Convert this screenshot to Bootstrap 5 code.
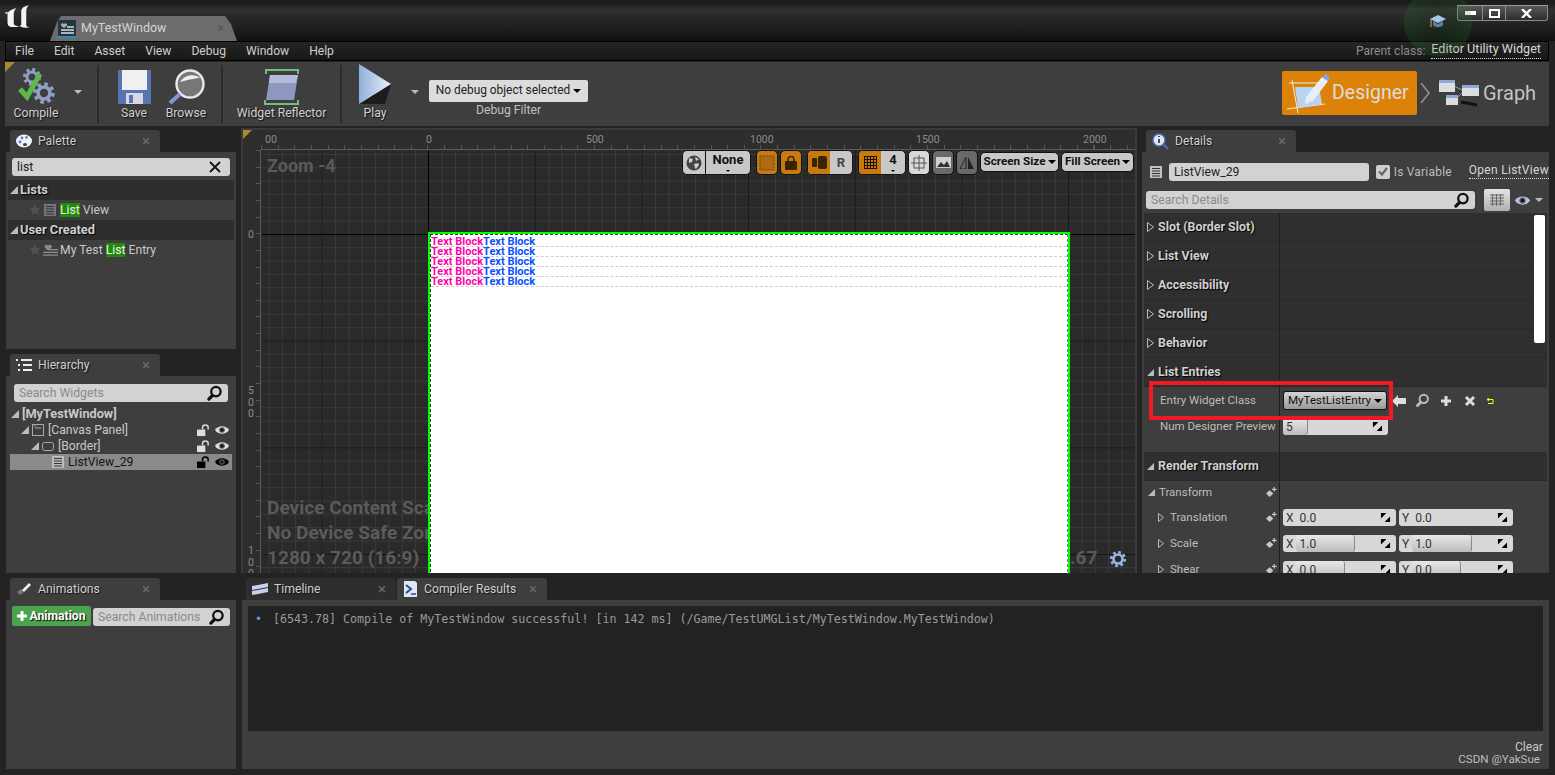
<!DOCTYPE html>
<html lang="en">
<head>
  <meta charset="UTF-8" />
  <meta name="viewport" content="width=device-width, initial-scale=1.0" />
  <title>MyTestWindow</title>
  <link href="https://cdn.jsdelivr.net/npm/bootstrap@5.3.2/dist/css/bootstrap.min.css" rel="stylesheet" />
  <style>
    html, body { height: 775px; overflow: hidden; }
    body {
      background: #232323;
      color: #c8c8c8;
      font-family: Roboto, "Liberation Sans", sans-serif;
      font-size: 12px;
      line-height: 1;
    }
    svg { display: block; flex: none; }
    .ue-app { width: 1555px; height: 775px; position: relative; overflow: hidden; }

    /* title bar */
    .ue-title { height: 41px; padding-left: 5px; background: linear-gradient(#1b1b1b 0, #1b1b1b 3px, #2f2f2f 10px, #1e1e1e 28px, #111 41px); }
    .ue-logo { width: 45px; height: 41px; }
    .ue-doc-tab {
      width: 187px; height: 25px; margin-top: 16px; padding: 0 5px 0 8px;
      background: #6c6c6c; color: #d4d4d4; font-size: 12.5px;
      clip-path: polygon(0 100%, 7px 6px, 11px 0, calc(100% - 12px) 0, calc(100% - 6px) 8px, 100% 100%);
    }
    .ue-win-btns { margin: 5px 7px 0 auto; height: 16px; border: 1px solid #8a8a8a; border-top-color: #999; border-radius: 0 0 3px 3px; background: linear-gradient(#5a5a5a, #2d2d2d); }
    .ue-win-btns > div { height: 100%; display: flex; align-items: center; justify-content: center; border-right: 1px solid #8a8a8a; }
    .ue-win-btns > div:last-child { border-right: 0; }
    .ue-glow { position: absolute; left: 1404px; top: -12px; width: 68px; height: 68px; border-radius: 50%; background: radial-gradient(circle, rgba(40,130,40,.06) 0, rgba(40,130,40,.2) 70%, rgba(60,170,60,.42) 96%, transparent 100%); pointer-events: none; }
    .ue-hat { position: absolute; left: 1430px; top: 14px; }

    /* menu */
    .ue-menu { height: 20px; margin: 0 6px 0 5px; padding: 0 7px 0 9px; background: linear-gradient(#262626, #161616); border: 1px solid #000; color: #cfcfcf; font-size: 12.1px; gap: 20px; }
    .ue-linkish { border-bottom: 1px dotted #ddd; color: #d6d6d6; padding-bottom: 2px; }

    /* main toolbar */
    .ue-tools { height: 64px; margin: 1px 6px 0 5px; background: #3e3e3e; position: relative; }
    .ue-corner { position: absolute; left: 0; top: 0; width: 0; height: 0; border-top: 10px solid #a98a2c; border-right: 10px solid transparent; }
    .ue-tool { display: flex; flex-direction: column; align-items: center; justify-content: flex-end; height: 58px; color: #d0d0d0; font-size: 12.2px; text-shadow: 1px 1px 1px #111; flex: none; }
    .ue-tool span { margin-top: 2px; margin-bottom: 1px; }
    .ue-sep { width: 2px; height: 58px; background: #2b2b2b; margin-top: 3px; flex: none; }
    .ue-caret { width: 0; height: 0; border-left: 4px solid transparent; border-right: 4px solid transparent; border-top: 4px solid #bbb; flex: none; }
    .ue-caret-dark { border-top-color: #000; }
    .ue-debug { width: 159px; margin-left: 3px; flex: none; }
    .ue-debug-box { height: 22px; background: #dcdcdc; color: #222; border-radius: 2px; gap: 3px; font-size: 11.9px; margin-top: 18px; }
    .ue-mode { position: absolute; left: 1277px; top: 9px; width: 135px; height: 44px; background: #dc8209; border-radius: 2px; color: #ddd; font-size: 19.5px; }
    .ue-graph { position: absolute; left: 1434px; top: 9px; height: 44px; color: #c4c4c4; font-size: 20px; }

    /* panels */
    .ue-main { height: 450px; padding: 3px 6px 0 6px; margin-top: 1px; }
    .ue-col-l { width: 230px; flex: none; }
    .ue-tabrow { height: 22px; padding-left: 4px; flex: none; }
    .ue-tab { width: 150px; height: 22px; padding: 0 10px 0 6px; background: #3e3e3e; border-radius: 3px 3px 0 0; color: #cfcfcf; font-size: 12.2px; text-shadow: 1px 1px 1px #111; gap: 6px; flex: none; }
    .ue-tab-off { background: #2e2e2e; }
    .ue-tab i { margin-left: auto; font-style: normal; color: #6a6a6a; font-size: 15px; line-height: 1; text-shadow: none; }
    .ue-panel { background: #3e3e3e; }
    .ue-field { background: #d2d2d2; border-radius: 3px; color: #333; font-size: 12.2px; padding: 0 5px; }
    .ue-field input.form-control { background: transparent; border: 0; border-radius: 0; padding: 0; height: 100%; min-height: 0; font: inherit; color: #222; box-shadow: none; }
    .ue-field input.form-control::placeholder { color: #8b8b8b; opacity: 1; }
    .ue-palhead { height: 20px; margin: 0 2px; padding-left: 2px; background: #2e2e2e; color: #d0d0d0; font-weight: 700; font-size: 12.8px; text-shadow: 1px 1px 1px #000; gap: 2px; }
    .ue-palitem { height: 20px; color: #c8c8c8; font-size: 12.2px; gap: 3px; padding-left: 24px; }
    .ue-hit { background: #1f8b06; color: #eee; }
    .ue-tree { height: 16px; color: #c8c8c8; font-size: 12.2px; margin: 0 4px; gap: 3px; }
    .ue-tree-sel { background: #8a8a8a; color: #151515; }
    .ue-treeend { margin-left: auto; gap: 5px; padding-right: 3px; }

    /* canvas */
    .ue-center { width: 896px; height: 445px; margin: -2px 0 0 5px; background: #2d2d2d; border: 2px solid #3a3a3a; border-bottom: 0; position: relative; overflow: hidden; flex: none; }
    .ue-ruler-x { position: absolute; left: 18px; right: 0; top: 0; height: 20px; background: repeating-linear-gradient(90deg, #555 0 1px, transparent 1px 16.65px) 0 bottom / 100% 4px no-repeat #2d2d2d; border-bottom: 1px solid #5a5a5a; }
    .ue-ruler-y { position: absolute; left: 0; top: 20px; bottom: 0; width: 18px; background: repeating-linear-gradient(#555 0 1px, transparent 1px 16.65px) right 0 / 4px 100% no-repeat #2d2d2d; border-right: 1px solid #5a5a5a; }
    .ue-rlabel { position: absolute; color: #8c8c8c; font-size: 10.5px; }
    .ue-grid {
      position: absolute; left: 19px; top: 21px; right: 0; bottom: 0; background-color: #2a2a2a;
      background-image:
        linear-gradient(#000, #000), linear-gradient(#000, #000),
        linear-gradient(90deg, #161616 1px, transparent 1px), linear-gradient(#161616 1px, transparent 1px),
        linear-gradient(90deg, #3a3a3a 1px, transparent 1px), linear-gradient(#3a3a3a 1px, transparent 1px);
      background-size: 1px 100%, 100% 1px, 106.67px 106.67px, 106.67px 106.67px, 13.33px 13.33px, 13.33px 13.33px;
      background-position: 166px 0, 0 83px, 59.5px 83px, 59.5px 83px, 6.5px 3px, 6.5px 3px;
      background-repeat: no-repeat, no-repeat, repeat, repeat, repeat, repeat;
    }
    .ue-ghost { position: absolute; color: #5b5b5b; font-weight: 700; white-space: nowrap; }
    .ue-ghost-big { font-size: 19.1px; }
    .ue-sheet { position: absolute; left: 185px; top: 102px; width: 642px; height: 345px; background: #fff; border: 2px solid #0f0; border-bottom: 0; }
    .ue-sheet-in { height: 100%; padding-top: 2px; border-right: 1px dashed #777; border-left: 1px dashed #333; border-top: 1px dashed #333; }
    .ue-entry { height: 10px; border-bottom: 1px dashed #ccc; font-size: 11px; font-weight: 700; line-height: 10px; white-space: nowrap; }
    .ue-pink { color: #f0a; }
    .ue-blue { color: #0a50ff; }
    .ue-vp { position: absolute; left: 439px; top: 20px; height: 26px; gap: 2px; color: #111; font-weight: 700; }
    .ue-vbtn { height: 25px; background: #c8c8c8; border: 1px solid #111; border-radius: 5px; overflow: hidden; font-size: 13px; }
    .ue-vcell { height: 100%; }
    .ue-orange { background: #c97a0f; }
    .ue-vdim { background: #6a6a6a; }
    .ue-vlight { background: #d8d8d8; }
    .ue-vdrop { height: 20px; margin-top: 2px; gap: 2px; font-size: 11.7px; }

    /* details */
    .ue-col-r { width: 407px; margin-left: 5px; flex: none; }
    .ue-details { height: 421px; overflow: hidden; position: relative; }
    .ue-nameline { height: 39px; padding-left: 8px; color: #c8c8c8; }
    .ue-check { width: 14px; height: 14px; background: #cfcfcf; border-radius: 2px; margin: 0 4px 0 7px; }
    .ue-list { margin: 0 2px; position: relative; }
    .ue-sec { height: 29px; background: #2f2f2f; color: #d0d0d0; font-weight: 700; font-size: 12.4px; text-shadow: 1px 1px 1px #000; padding-left: 3px; gap: 4px; border-bottom: 1px solid #292929; }
    .ue-divider { position: absolute; left: 135px; top: 0; bottom: 0; width: 1px; background: #1f1f1f; }
    .ue-thumb { position: absolute; left: 390px; top: 2px; width: 11px; height: 128px; background: #fff; border-radius: 2px; }
    .ue-prop { background: #3e3e3e; color: #bdbdbd; font-size: 11.5px; }
    .ue-propname { width: 135px; flex: none; overflow: hidden; white-space: nowrap; }
    .ue-combo { width: 104px; height: 19px; margin-left: 4px; gap: 3px; background: linear-gradient(#d4d4d4, #9a9a9a); border: 1px solid #111; border-radius: 3px; color: #111; font-size: 11.6px; }
    .ue-spin { height: 17px; background: #d8d8d8; border-radius: 3px; color: #333; font-size: 12px; position: relative; overflow: hidden; padding: 0 5px 0 3px; }
    .ue-spin b { font-weight: 400; position: relative; }
    .ue-spin svg { margin-left: auto; position: relative; }
    .ue-spin u { position: absolute; left: 13px; top: 0; bottom: 0; background: linear-gradient(#e8e8e8, #bcbcbc); border-right: 1px solid #888; border-radius: 3px; text-decoration: none; }
    .ue-redbox { position: absolute; left: 7px; top: 229px; width: 244px; height: 39px; border: 4px solid #ed1c24; pointer-events: none; }

    /* bottom */
    .ue-bottom { height: 192px; padding: 1px 6px 0; }
    .ue-col-b { width: 1307px; margin-left: 6px; flex: none; }
    .ue-logbox { height: 125px; margin: 6px 6px 0; background: #222; padding: 8px 7px; font-family: "DejaVu Sans Mono", monospace; font-size: 11.65px; color: #9a9a9a; white-space: nowrap; gap: 11px; }
    .ue-addbtn { width: 79px; height: 20px; background: #4da24d; border-radius: 2px; color: #fff; font-weight: 700; font-size: 12.2px; text-shadow: 1px 1px 1px #000; gap: 2px; }
    .ue-foot { height: 38px; padding: 10px 6px 0 0; text-align: right; }
  </style>
</head>
<body>

  <svg width="0" height="0" class="position-absolute">
    <defs>
      <symbol id="s-spin" viewBox="0 0 12 12"><path d="M1 1h6L1 7zM11 11H5l6-6z" fill="#000"/></symbol>
      <symbol id="s-mag" viewBox="0 0 18 18"><circle cx="10.5" cy="7" r="5" fill="none" stroke="currentColor" stroke-width="2.4"/><path d="M7 11l-4 4" stroke="currentColor" stroke-width="3.4" stroke-linecap="round"/></symbol>
      <symbol id="s-lock" viewBox="0 0 14 14"><rect x="0" y="6" width="9" height="7" fill="currentColor"/><path d="M6 6V3.500a3 2.500 0 0 1 6 0V6" fill="none" stroke="currentColor" stroke-width="1.600"/></symbol>
      <symbol id="s-eye" viewBox="0 0 14 10"><path d="M0 5C3 0 11 0 14 5 11 10 3 10 0 5z" fill="currentColor"/><circle cx="7" cy="5" r="2.800" fill="#555"/><circle cx="7" cy="5" r="1.500" fill="#111"/></symbol>
      <symbol id="s-listicon" viewBox="0 0 12 12"><rect width="12" height="12" fill="currentColor" opacity=".75"/><path d="M2 2.500h8M2 5h8M2 7.500h8M2 10h8" stroke="#333" stroke-width="1"/></symbol>
      <symbol id="s-star" viewBox="0 0 10 10"><path d="M5 .5l1.300 3H9.500L7 5.600 8 9 5 7.100 2 9l1-3.400L.5 3.500h3.200z" fill="#4f4f4f" stroke="#5e5e5e" stroke-width=".5"/></symbol>
      <symbol id="s-entry" viewBox="0 0 16 14"><path d="M2 1.500c1.200-1.200 2.500-1 3.500 0 1-1 2.300-1.200 3.500 0 1 1.200.5 2.500-3.500 5.500-4-3-4.500-4.300-3.500-5.500z" fill="#8a8a8a"/><path d="M6 6h10M0 9h16M0 12h16" stroke="#8f8f8f" stroke-width="1.500"/></symbol>
      <symbol id="s-addkey" viewBox="0 0 12 12"><path d="M0 7l4-3.500 4 3.500-4 4z" fill="#c8c8c8"/><path d="M9 0v5M6.500 2.500h5" stroke="#c8c8c8" stroke-width="1.300"/></symbol>
      <symbol id="s-gear" viewBox="0 0 20 20"><circle cx="10" cy="10" r="7.500" fill="none" stroke="currentColor" stroke-width="3" stroke-dasharray="3 2.890"/><circle cx="10" cy="10" r="5" fill="none" stroke="currentColor" stroke-width="3"/></symbol>
    </defs>
  </svg>

  <div class="ue-app">
    <div class="ue-title d-flex align-items-start">
      <svg class="ue-logo" viewBox="0 0 36 41" preserveAspectRatio="none"><path d="M1 14c2-3 5-5 8-6-1 2-2 3-2 6v9c0 2 1 3 3 3 1 0 2 0 3-1V11c0-2 1-3 2-4l4-2c-1 2-2 3-2 6v13c0 2 0 3 3 3-2 1-5 1-7 0l-1-1c-2 1-4 1-6 1-3 0-4-2-4-5v-8c0-2 0-2-1-2l-1 1z" fill="#f4f4f4"/></svg>
      <div class="ue-doc-tab d-flex align-items-center">
        <svg width="18" height="18" viewBox="0 0 18 18" style="margin-right:5px"><rect width="18" height="18" fill="#23353f"/><path d="M3 4c1-1 2-1 3 0 1-1 2-1 3 0 .5 1 0 2-3 4-3-2-3.500-3-3-4z" fill="#aaa"/><path d="M9 7h7M3 10h13M3 13h13" stroke="#ddd" stroke-width="1.500"/><rect y="16" width="18" height="2" fill="#2b8bc4"/></svg>
        <span>MyTestWindow</span>
        <span class="ms-auto me-2" style="color:#555">&#215;</span>
      </div>
      <div class="ue-win-btns d-flex">
        <div style="width:25px"><svg width="11" height="4"><rect width="11" height="4" fill="#fff"/></svg></div>
        <div style="width:23px"><svg width="11" height="9"><rect x="1" y="1" width="9" height="7" fill="none" stroke="#fff" stroke-width="2"/></svg></div>
        <div style="width:41px"><svg width="11" height="9" viewBox="0 0 11 9"><path d="M1 0l9 9M10 0L1 9" stroke="#fff" stroke-width="2.400"/></svg></div>
      </div>
    </div>
    <div class="ue-glow"></div>
    <svg class="ue-hat" width="16" height="16" viewBox="0 0 16 16"><path d="M0 5l8-4 8 4-8 4z" fill="#a9c4e6"/><path d="M3 7v4c2 3 8 3 10 0V7L8 10z" fill="#5e7ea8"/><path d="M1 5v8" stroke="#d8b060" stroke-width="1"/></svg>

    <nav class="ue-menu d-flex align-items-center">
      <span>File</span><span>Edit</span><span>Asset</span><span>View</span><span>Debug</span><span>Window</span><span>Help</span>
      <span class="ms-auto" style="color:#8d8d8d;margin-right:-14px">Parent class:</span>
      <span class="ue-linkish" style="font-size:12.6px">Editor Utility Widget</span>
    </nav>

    <div class="ue-tools d-flex">
      <div class="ue-corner"></div>
      <div class="ue-tool" style="width:60px;margin-left:1px">
        <svg width="40" height="38" viewBox="0 0 40 38" style="color:#8fa0c4"><use href="#s-gear" x="6" y="0" width="20" height="20"/><use href="#s-gear" x="16" y="14" width="24" height="24"/><path d="M4 22l7 8L24 7" fill="none" stroke="#5cb847" stroke-width="5"/></svg>
        <span>Compile</span>
      </div>
      <div class="d-flex align-items-center" style="width:31px;padding-left:8px;height:60px"><div class="ue-caret"></div></div>
      <div class="ue-sep"></div>
      <div class="ue-tool" style="width:52px;margin-left:9px">
        <svg width="33" height="36" viewBox="0 0 33 36"><path d="M0 1h33v34H0z" fill="#5a74b2"/><rect x="4" y="1" width="25" height="20" fill="#f0f0f0"/><rect x="8" y="24" width="17" height="11" fill="#d8d8e4"/><rect x="11" y="26" width="4" height="8" fill="#5a74b2"/></svg>
        <span>Save</span>
      </div>
      <div class="ue-tool" style="width:52px">
        <svg width="38" height="36" viewBox="0 0 38 36"><circle cx="23" cy="15" r="13" fill="#777"/><path d="M13 13c4-7 14-9 20-4-4 0-12 2-20 4z" fill="#eee"/><circle cx="23" cy="15" r="13.500" fill="none" stroke="#e8e8f0" stroke-width="2.400"/><path d="M13 25L3 34" stroke="#8098d0" stroke-width="4"/></svg>
        <span>Browse</span>
      </div>
      <div class="ue-sep" style="margin-left:9px"></div>
      <div class="ue-tool" style="width:117px">
        <svg width="40" height="36" viewBox="0 0 40 36"><path d="M4 5V1h32v4M3 31v4h33v-4" fill="none" stroke="#6fbf7f" stroke-width="2"/><path d="M8 6h28l-4 25H4z" fill="#8d97c0"/><path d="M8 6h28l-2 8H7z" fill="#b4bcdc"/></svg>
        <span>Widget Reflector</span>
      </div>
      <div class="ue-sep"></div>
      <div class="ue-tool" style="width:66px">
        <svg width="34" height="42" viewBox="0 0 34 42"><defs><linearGradient id="g-play" x1="0" x2="1"><stop offset="0" stop-color="#8fb0dc"/><stop offset="1" stop-color="#e8f0fa"/></linearGradient></defs><path d="M1 41L33 21l-6 20z" fill="#1c1c1c"/><path d="M1 1l32 20L1 41z" fill="url(#g-play)"/></svg>
        <span>Play</span>
      </div>
      <div class="d-flex align-items-center" style="width:18px;padding-left:3px;height:60px"><div class="ue-caret"></div></div>
      <div class="ue-debug d-flex flex-column">
        <div class="ue-debug-box d-flex align-items-center justify-content-center">No debug object selected<div class="ue-caret ue-caret-dark"></div></div>
        <div class="text-center" style="margin-top:2px;font-size:12.2px;color:#c0c0c0">Debug Filter</div>
      </div>

      <div class="ue-mode d-flex align-items-center">
        <svg width="46" height="40" viewBox="0 0 46 40" style="margin:0 1px 0 3px"><path d="M4 10h34M7 7l6 33M2 36l38-5" stroke="#eee" stroke-width="1"/><path d="M10 14h24l3 17-24 4z" fill="#b7d4f2"/><path d="M21 24L37 4l6 4-15 20-8 3z" fill="#e8eef8"/><path d="M37 4l6 4 2-4-4-3z" fill="#7fa6e0"/></svg>
        <span>Designer</span>
      </div>
      <svg class="position-absolute" style="left:1412px;top:18px" width="16" height="26" viewBox="0 0 16 26"><path d="M4 3l8 10-8 10" fill="none" stroke="#8b8b8b" stroke-width="1.800"/></svg>
      <div class="ue-graph d-flex align-items-center">
        <svg width="40" height="30" viewBox="0 0 40 30" class="me-1"><path d="M15 8l8 4M16 22l8-8" stroke="#8aa" stroke-width="1"/><rect y="2" width="16" height="12" fill="#ddd"/><rect y="2" width="16" height="3" fill="#8fa8d8"/><rect x="23" y="7" width="17" height="11" fill="#ddd"/><rect x="23" y="7" width="17" height="3" fill="#8fa8d8"/><rect x="7" y="17" width="12" height="10" fill="#ddd"/><rect x="7" y="17" width="12" height="3" fill="#8fa8d8"/><path d="M22 24l16 3" stroke="#111" stroke-width="3"/></svg>
        <span>Graph</span>
      </div>
    </div>

    <div class="ue-main d-flex">
      <div class="ue-col-l d-flex flex-column">
        <div class="ue-tabrow">
          <div class="ue-tab d-flex align-items-center">
            <svg width="16" height="14" viewBox="0 0 16 14"><ellipse cx="8" cy="7" rx="8" ry="6.500" fill="#eef2fa"/><circle cx="4" cy="8" r="1.400" fill="#4b7fd0"/><circle cx="6" cy="4" r="1.400" fill="#4b7fd0"/><circle cx="10.500" cy="3.500" r="1.400" fill="#888"/><ellipse cx="9" cy="10.500" rx="2" ry="1.500" fill="#3e3e3e"/></svg>
            <span>Palette</span><i>&#215;</i>
          </div>
        </div>
        <div class="ue-panel" style="height:197px">
          <div class="ue-field d-flex align-items-center" style="height:18px;margin:6px 6px 4px">
            <input class="form-control" value="list" aria-label="Search palette">
            <svg width="12" height="12" viewBox="0 0 12 12" class="me-1"><path d="M1 1l10 10M11 1L1 11" stroke="#111" stroke-width="1.800"/></svg>
          </div>
          <div class="ue-palhead d-flex align-items-center"><svg width="8" height="8"><path d="M0 8h8V0z" fill="#bbb"/></svg><span>Lists</span></div>
          <div class="ue-palitem d-flex align-items-center"><svg width="10" height="10"><use href="#s-star"/></svg><svg width="12" height="12" style="color:#888;margin:0 1px"><use href="#s-listicon"/></svg><span><span class="ue-hit">List</span> View</span></div>
          <div class="ue-palhead d-flex align-items-center"><svg width="8" height="8"><path d="M0 8h8V0z" fill="#bbb"/></svg><span>User Created</span></div>
          <div class="ue-palitem d-flex align-items-center"><svg width="10" height="10"><use href="#s-star"/></svg><svg width="15" height="13" style="margin-right:-1px"><use href="#s-entry"/></svg><span><span>My Test </span><span class="ue-hit">List</span> Entry</span></div>
        </div>
        <div class="ue-tabrow" style="margin-top:5px">
          <div class="ue-tab d-flex align-items-center">
            <svg width="16" height="12" viewBox="0 0 16 12"><path d="M0 1h2M5 1h11M2 6h2M7 6h9M2 11h2M7 11h9" stroke="#eee" stroke-width="2"/></svg>
            <span>Hierarchy</span><i>&#215;</i>
          </div>
        </div>
        <div class="ue-panel" style="height:197px">
          <div class="ue-field d-flex align-items-center" style="height:18px;margin:8px 8px 4px">
            <input class="form-control" placeholder="Search Widgets" aria-label="Search widgets">
            <svg width="17" height="17" style="color:#111"><use href="#s-mag"/></svg>
          </div>
          <div class="ue-tree d-flex align-items-center" style="padding-left:1px;font-weight:700;font-size:12.7px"><svg width="8" height="8"><path d="M0 8h8V0z" fill="#bbb"/></svg><span>[MyTestWindow]</span></div>
          <div class="ue-tree d-flex align-items-center" style="padding-left:11px"><svg width="8" height="8"><path d="M0 8h8V0z" fill="#bbb"/></svg><svg width="12" height="12" viewBox="0 0 12 12"><rect x=".5" y=".5" width="11" height="11" fill="none" stroke="#aaa"/><path d="M3 4h6" stroke="#aaa"/><path d="M3 1v2" stroke="#5aa0e0"/></svg><span style="margin-left:1px">[Canvas Panel]</span>
            <div class="ue-treeend d-flex align-items-center" style="color:#ddd"><svg width="13" height="13"><use href="#s-lock"/></svg><svg width="14" height="10"><use href="#s-eye"/></svg></div></div>
          <div class="ue-tree d-flex align-items-center" style="padding-left:21px"><svg width="8" height="8"><path d="M0 8h8V0z" fill="#bbb"/></svg><svg width="12" height="9" viewBox="0 0 12 9"><rect x=".5" y=".5" width="11" height="8" rx="2" fill="none" stroke="#aaa"/></svg><span style="margin-left:1px">[Border]</span>
            <div class="ue-treeend d-flex align-items-center" style="color:#ddd"><svg width="13" height="13"><use href="#s-lock"/></svg><svg width="14" height="10"><use href="#s-eye"/></svg></div></div>
          <div class="ue-tree ue-tree-sel d-flex align-items-center" style="padding-left:42px"><svg width="12" height="12" style="color:#ccc"><use href="#s-listicon"/></svg><span style="margin-left:1px">ListView_29</span>
            <div class="ue-treeend d-flex align-items-center" style="color:#000"><svg width="13" height="13"><use href="#s-lock"/></svg><svg width="14" height="10"><use href="#s-eye"/></svg></div></div>
        </div>
      </div>

      <div class="ue-center">
        <div class="ue-grid"></div>
        <div class="ue-ruler-x"></div>
        <div class="ue-ruler-y"></div>
        <div class="ue-corner" style="border-top-width:9px;border-right-width:9px"></div>
        <span class="ue-rlabel" style="left:22px;top:5px">00</span>
        <span class="ue-rlabel" style="left:183px;top:5px">0</span>
        <span class="ue-rlabel" style="left:343px;top:5px">500</span>
        <span class="ue-rlabel" style="left:507px;top:5px">1000</span>
        <span class="ue-rlabel" style="left:673px;top:5px">1500</span>
        <span class="ue-rlabel" style="left:840px;top:5px">2000</span>
        <span class="ue-rlabel" style="left:5px;top:100px">0</span>
        <span class="ue-rlabel" style="left:5px;top:255px;line-height:11.500px">5<br>0<br>0</span>
        <span class="ue-rlabel" style="left:5px;top:415px;line-height:11.500px">1<br>0<br>0</span>

        <span class="ue-ghost" style="left:24px;top:27px;font-size:18px">Zoom -4</span>
        <span class="ue-ghost ue-ghost-big" style="left:24px;top:368px">Device Content Scale</span>
        <span class="ue-ghost ue-ghost-big" style="left:24px;top:393px">No Device Safe Zone</span>
        <span class="ue-ghost ue-ghost-big" style="left:24px;top:418px">1280 x 720 (16:9)</span>
        <span class="ue-ghost ue-ghost-big" style="left:827px;top:418px">.67</span>

        <div class="ue-sheet">
          <div class="ue-sheet-in">
            <div class="ue-entry"><span class="ue-pink">Text Block</span><span class="ue-blue">Text Block</span></div>
            <div class="ue-entry"><span class="ue-pink">Text Block</span><span class="ue-blue">Text Block</span></div>
            <div class="ue-entry"><span class="ue-pink">Text Block</span><span class="ue-blue">Text Block</span></div>
            <div class="ue-entry"><span class="ue-pink">Text Block</span><span class="ue-blue">Text Block</span></div>
            <div class="ue-entry"><span class="ue-pink">Text Block</span><span class="ue-blue">Text Block</span></div>
          </div>
        </div>

        <svg class="position-absolute" style="left:866px;top:420px;color:#9db2e0" width="18" height="18"><use href="#s-gear"/></svg>

        <div class="ue-vp d-flex align-items-start">
          <div class="ue-vbtn d-flex">
            <div class="ue-vcell d-flex align-items-center justify-content-center" style="width:23px;border-right:1px solid #111">
              <svg width="16" height="16" viewBox="0 0 16 16"><circle cx="8" cy="8" r="7.500" fill="#444"/><path d="M3 3l4 1-1 3-3 1zM9 2l4 2-3 2zM8 9l4-1 1 2-3 4-1-1z" fill="#ccc"/></svg>
            </div>
            <div class="ue-vcell d-flex flex-column align-items-center justify-content-center" style="width:44px"><span>None</span><span class="ue-caret ue-caret-dark mt-1" style="border-left-width:2px;border-right-width:2px;border-top-width:2px"></span></div>
          </div>
          <div class="ue-vbtn ue-orange d-flex align-items-center justify-content-center" style="width:22px;margin-left:3px"><svg width="16" height="16"><rect x="1" y="1" width="14" height="14" fill="#b06a10" stroke="#5f4a2a" stroke-dasharray="2 1"/></svg></div>
          <div class="ue-vbtn ue-orange d-flex align-items-center justify-content-center" style="width:22px"><svg width="12" height="14" viewBox="0 0 12 14"><rect y="5" width="12" height="9" rx="1" fill="#3a2205"/><path d="M3 5V3.500a3 3 0 0 1 6 0V5" fill="none" stroke="#3a2205" stroke-width="1.500"/></svg></div>
          <div class="ue-vbtn d-flex" style="margin-left:3px">
            <div class="ue-vcell ue-orange d-flex align-items-center justify-content-center" style="width:22px"><svg width="15" height="13" viewBox="0 0 15 13"><rect y="2" width="5" height="9" rx="1" fill="#3a2205"/><rect x="6" width="9" height="13" rx="2" fill="#3a2205"/></svg></div>
            <div class="ue-vcell d-flex align-items-center justify-content-center" style="width:22px;color:#444">R</div>
          </div>
          <div class="ue-vbtn d-flex" style="margin-left:3px">
            <div class="ue-vcell ue-orange d-flex align-items-center justify-content-center" style="width:22px"><svg width="13" height="13" viewBox="0 0 13 13"><path d="M.5 0v13M3.500 0v13M6.500 0v13M9.500 0v13M12.500 0v13M0 .5h13M0 3.500h13M0 6.500h13M0 9.500h13M0 12.500h13" stroke="#1a1205"/></svg></div>
            <div class="ue-vcell d-flex flex-column align-items-center justify-content-center" style="width:24px"><span>4</span><span class="ue-caret ue-caret-dark mt-1" style="border-left-width:2px;border-right-width:2px;border-top-width:2px"></span></div>
          </div>
          <div class="ue-vbtn ue-vlight d-flex align-items-center justify-content-center" style="width:22px"><svg width="16" height="16" viewBox="0 0 16 16"><rect x="3" y="3" width="10" height="10" fill="none" stroke="#555"/><path d="M8 0v16M0 8h16" stroke="#555"/></svg></div>
          <div class="ue-vbtn ue-vdim d-flex align-items-center justify-content-center" style="width:22px"><svg width="15" height="11" viewBox="0 0 15 11"><rect width="15" height="11" fill="#d0d0d0"/><path d="M1 10l4-5 3 3 3-4 3 6z" fill="#333"/></svg></div>
          <div class="ue-vbtn ue-vdim d-flex align-items-center justify-content-center" style="width:22px"><svg width="16" height="13" viewBox="0 0 16 13"><path d="M7 1v12H1z" fill="none" stroke="#222"/><path d="M9 1v12h6z" fill="#222"/></svg></div>
          <div class="ue-vbtn ue-vdrop d-flex align-items-center justify-content-center" style="width:79px">Screen Size<div class="ue-caret ue-caret-dark"></div></div>
          <div class="ue-vbtn ue-vdrop d-flex align-items-center justify-content-center" style="width:73px">Fill Screen<div class="ue-caret ue-caret-dark"></div></div>
        </div>
      </div>

      <div class="ue-col-r d-flex flex-column">
        <div class="ue-tabrow">
          <div class="ue-tab d-flex align-items-center">
            <svg width="17" height="17" viewBox="0 0 17 17"><circle cx="7" cy="7" r="6" fill="#dfe6f4" stroke="#4d70b8" stroke-width="1.500"/><path d="M7 3v1M7 6v4" stroke="#223" stroke-width="1.600"/><path d="M11 11l5 5" stroke="#4d70b8" stroke-width="2"/></svg>
            <span>Details</span><i>&#215;</i>
          </div>
        </div>
        <div class="ue-panel ue-details">
          <div class="ue-nameline d-flex align-items-center">
            <svg width="12" height="12" style="color:#eee;margin-right:7px"><use href="#s-listicon"/></svg>
            <div class="ue-field d-flex align-items-center" style="width:200px;height:18px"><input class="form-control" value="ListView_29" aria-label="Name"></div>
            <div class="ue-check d-flex align-items-center justify-content-center"><svg width="10" height="9" viewBox="0 0 10 9"><path d="M1 4.500l3 3 5-6.500" fill="none" stroke="#666" stroke-width="2.200"/></svg></div>
            <span style="color:#bdbdbd;width:75px;letter-spacing:.2px">Is Variable</span>
            <span class="ue-linkish" style="white-space:nowrap;letter-spacing:.3px">Open ListView</span>
          </div>
          <div class="d-flex align-items-center" style="height:22px;margin-top:-2px;padding-left:4px">
            <div class="ue-field d-flex align-items-center" style="width:329px;height:18px">
              <input class="form-control" placeholder="Search Details" aria-label="Search details">
              <svg width="17" height="17" style="color:#111"><use href="#s-mag"/></svg>
            </div>
            <div class="d-flex align-items-center justify-content-center" style="width:26px;height:22px;margin-left:9px;background:linear-gradient(#e4e4e4,#b0b0b0);border-radius:2px">
              <svg width="14" height="12" viewBox="0 0 14 12"><path d="M0 1h14M0 4h14M0 7h14M0 10h14M2.500 0v12M6.500 0v12M10.500 0v12" stroke="#666"/></svg>
            </div>
            <svg width="17" height="11" class="ms-1" style="color:#b4c2dc"><use href="#s-eye"/></svg>
            <div class="ue-caret ms-1"></div>
          </div>
          <div class="ue-list" style="margin-top:2px">
            <div class="ue-divider"></div>
            <div class="ue-sec d-flex align-items-center"><svg width="7" height="10"><path d="M.5.500L6.500 5 .5 9.500z" fill="none" stroke="#bbb"/></svg>Slot (Border Slot)</div>
            <div class="ue-sec d-flex align-items-center"><svg width="7" height="10"><path d="M.5.500L6.500 5 .5 9.500z" fill="none" stroke="#bbb"/></svg>List View</div>
            <div class="ue-sec d-flex align-items-center"><svg width="7" height="10"><path d="M.5.500L6.500 5 .5 9.500z" fill="none" stroke="#bbb"/></svg>Accessibility</div>
            <div class="ue-sec d-flex align-items-center"><svg width="7" height="10"><path d="M.5.500L6.500 5 .5 9.500z" fill="none" stroke="#bbb"/></svg>Scrolling</div>
            <div class="ue-sec d-flex align-items-center"><svg width="7" height="10"><path d="M.5.500L6.500 5 .5 9.500z" fill="none" stroke="#bbb"/></svg>Behavior</div>
            <div class="ue-sec d-flex align-items-center"><svg width="7" height="7"><path d="M0 7h7V0z" fill="#bbb"/></svg>List Entries</div>
            <div class="ue-thumb"></div>

            <div class="ue-prop" style="height:65px;padding-top:4px">
              <div class="d-flex align-items-center" style="height:19px">
                <div class="ue-propname" style="padding-left:16px">Entry Widget Class</div>
                <div class="ue-combo d-flex align-items-center justify-content-center">MyTestListEntry<div class="ue-caret ue-caret-dark"></div></div>
                <svg width="14" height="12" viewBox="0 0 14 12" style="margin-left:5px"><path d="M0 6l6-6v3h8v6H6v3z" fill="#ddd"/></svg>
                <svg width="15" height="15" style="color:#bbb;margin-left:9px"><use href="#s-mag"/></svg>
                <svg width="12" height="12" viewBox="0 0 12 12" style="margin-left:10px"><path d="M6 1v10M1 6h10" stroke="#ddd" stroke-width="3"/></svg>
                <svg width="12" height="12" viewBox="0 0 12 12" style="margin-left:12px"><path d="M2 2l8 8M10 2l-8 8" stroke="#ddd" stroke-width="3"/></svg>
                <svg width="8" height="8" viewBox="0 0 8 8" style="margin-left:10px"><path d="M3 1L1 2.500 3 4M1 2.500h6v4H2" fill="none" stroke="#ff0" stroke-width="1"/></svg>
              </div>
              <div class="d-flex align-items-center" style="height:17px;margin-top:8px">
                <div class="ue-propname" style="padding-left:16px">Num Designer Preview I</div>
                <div class="ue-spin d-flex align-items-center" style="width:105px;margin-left:4px"><u style="left:0;width:25px"></u><b>5</b><svg width="11" height="11"><use href="#s-spin"/></svg></div>
              </div>
            </div>
            <div class="ue-sec d-flex align-items-center"><svg width="7" height="7"><path d="M0 7h7V0z" fill="#bbb"/></svg>Render Transform</div>
            <div class="ue-prop" style="padding-top:3px;height:100px">
              <div class="d-flex align-items-center" style="height:17px">
                <div class="ue-propname d-flex align-items-center" style="padding:0 2px 0 4px"><svg width="7" height="7"><path d="M0 7h7V0z" fill="#bbb"/></svg><span class="ms-1">Transform</span><svg class="ms-auto" width="11" height="11"><use href="#s-addkey"/></svg></div>
              </div>
              <div class="d-flex align-items-center" style="height:17px;margin-top:8px">
                <div class="ue-propname d-flex align-items-center" style="padding:0 2px 0 14px"><svg width="6" height="9"><path d="M.5.500L5.500 4.500 .5 8.500z" fill="none" stroke="#bbb"/></svg><span style="margin-left:6px">Translation</span><svg class="ms-auto" width="11" height="11"><use href="#s-addkey"/></svg></div>
                <div class="ue-spin d-flex align-items-center" style="width:113px;margin-left:4px"><b>X&nbsp;&nbsp;0.0</b><svg width="11" height="11"><use href="#s-spin"/></svg></div>
                <div class="ue-spin d-flex align-items-center" style="width:114px;margin-left:3px"><b>Y&nbsp;&nbsp;0.0</b><svg width="11" height="11"><use href="#s-spin"/></svg></div>
              </div>
              <div class="d-flex align-items-center" style="height:17px;margin-top:9px">
                <div class="ue-propname d-flex align-items-center" style="padding:0 2px 0 14px"><svg width="6" height="9"><path d="M.5.500L5.500 4.500 .5 8.500z" fill="none" stroke="#bbb"/></svg><span style="margin-left:6px">Scale</span><svg class="ms-auto" width="11" height="11"><use href="#s-addkey"/></svg></div>
                <div class="ue-spin d-flex align-items-center" style="width:113px;margin-left:4px"><u style="width:59px"></u><b>X&nbsp;&nbsp;1.0</b><svg width="11" height="11"><use href="#s-spin"/></svg></div>
                <div class="ue-spin d-flex align-items-center" style="width:114px;margin-left:3px"><u style="width:60px"></u><b>Y&nbsp;&nbsp;1.0</b><svg width="11" height="11"><use href="#s-spin"/></svg></div>
              </div>
              <div class="d-flex align-items-center" style="height:17px;margin-top:9px">
                <div class="ue-propname d-flex align-items-center" style="padding:0 2px 0 14px"><svg width="6" height="9"><path d="M.5.500L5.500 4.500 .5 8.500z" fill="none" stroke="#bbb"/></svg><span style="margin-left:6px">Shear</span><svg class="ms-auto" width="11" height="11"><use href="#s-addkey"/></svg></div>
                <div class="ue-spin d-flex align-items-center" style="width:113px;margin-left:4px"><u style="width:49px"></u><b>X&nbsp;&nbsp;0.0</b><svg width="11" height="11"><use href="#s-spin"/></svg></div>
                <div class="ue-spin d-flex align-items-center" style="width:114px;margin-left:3px"><u style="width:49px"></u><b>Y&nbsp;&nbsp;0.0</b><svg width="11" height="11"><use href="#s-spin"/></svg></div>
              </div>
            </div>
          </div>
          <div class="ue-redbox"></div>
        </div>
      </div>
    </div>

    <div class="ue-bottom d-flex">
      <div class="ue-col-l d-flex flex-column">
        <div class="ue-tabrow">
          <div class="ue-tab d-flex align-items-center">
            <svg width="16" height="14" viewBox="0 0 16 14"><path d="M1 10l3 3 4-3-3-3z" fill="#777"/><path d="M6 8l7-7 2 2-7 7z" fill="#e8eef8"/></svg>
            <span>Animations</span><i>&#215;</i>
          </div>
        </div>
        <div class="ue-panel d-flex align-items-start" style="height:169px;padding:6px 6px 0;gap:2px">
          <div class="ue-addbtn d-flex align-items-center justify-content-center"><svg width="10" height="10"><path d="M5 0v10M0 5h10" stroke="#fff" stroke-width="3"/></svg>Animation</div>
          <div class="ue-field d-flex align-items-center" style="width:137px;height:18px;margin-top:2px">
            <input class="form-control" placeholder="Search Animations" aria-label="Search animations">
            <svg width="17" height="17" style="color:#111"><use href="#s-mag"/></svg>
          </div>
        </div>
      </div>
      <div class="ue-col-b d-flex flex-column">
        <div class="d-flex" style="height:22px;padding-left:4px;gap:1px">
          <div class="ue-tab ue-tab-off d-flex align-items-center">
            <svg width="16" height="12" viewBox="0 0 16 12"><path d="M0 3l16-3v4L0 7zM0 8l16-3v4L0 12z" fill="#c4d4ee"/></svg>
            <span>Timeline</span><i>&#215;</i>
          </div>
          <div class="ue-tab d-flex align-items-center">
            <svg width="15" height="16" viewBox="0 0 15 16"><path d="M1 0h11l2 2v14H1z" fill="#dfe6f4"/><path d="M3 4l5 4-5 4" fill="none" stroke="#2a4a8a" stroke-width="2"/><path d="M8 13h5" stroke="#2a4a8a" stroke-width="1.500"/></svg>
            <span>Compiler Results</span><i>&#215;</i>
          </div>
        </div>
        <div class="ue-panel" style="height:169px">
          <div class="ue-logbox d-flex">
            <span style="color:#5aa0e0">&#8226;</span>
            <span>[6543.78] Compile of MyTestWindow successful! [in 142 ms] (/Game/TestUMGList/MyTestWindow.MyTestWindow)</span>
          </div>
          <div class="ue-foot">
            <div style="color:#c8c8c8;font-size:12.2px">Clear</div>
            <div style="color:#bdbdbd;font-size:11.6px;margin:1px 3px 0 0">CSDN @YakSue</div>
          </div>
        </div>
      </div>
    </div>
  </div>

  <script src="https://cdn.jsdelivr.net/npm/bootstrap@5.3.2/dist/js/bootstrap.bundle.min.js"></script>
</body>
</html>
